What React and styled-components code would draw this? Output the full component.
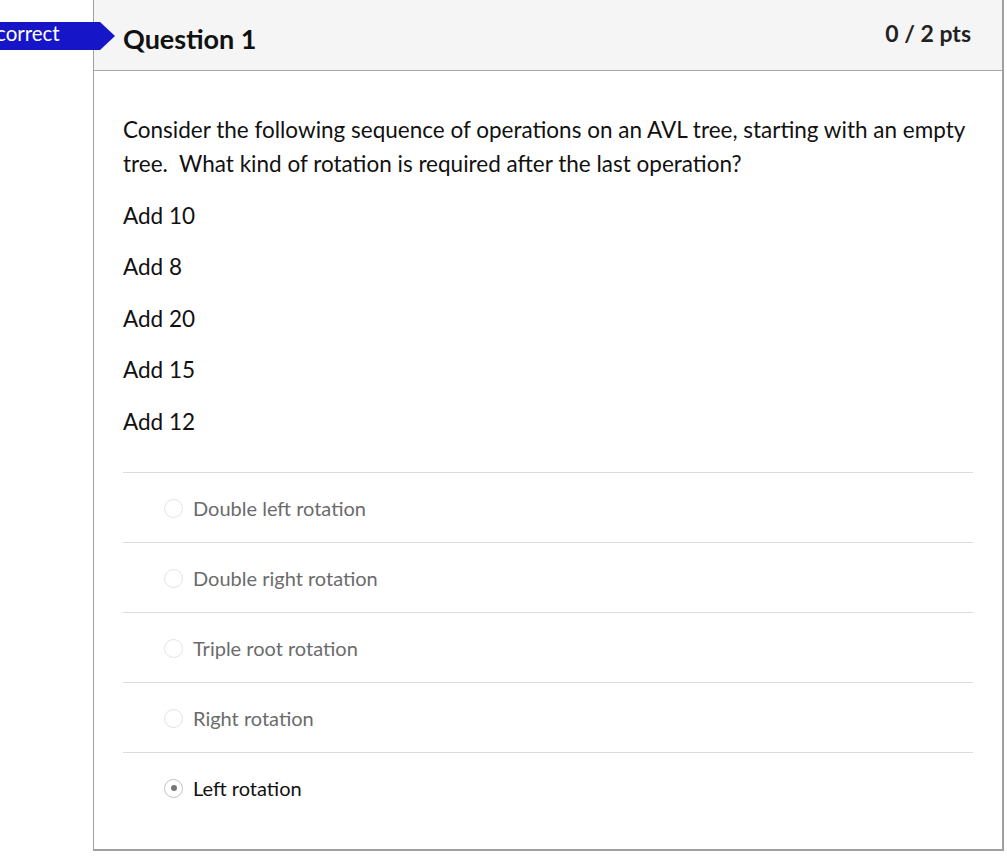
import React from "react";
import styled, { createGlobalStyle } from "styled-components";

const GlobalStyle = createGlobalStyle`
  body {
    margin: 0;
    background: #fff;
    font-family: Lato, "Open Sans", sans-serif;
    color: #2d3b45;
  }
`;

const answers = [
  { text: "Double left rotation" },
  { text: "Double right rotation" },
  { text: "Triple root rotation" },
  { text: "Right rotation" },
  { text: "Left rotation", selected: true },
];

const steps = ["Add 10", "Add 8", "Add 20", "Add 15", "Add 12"];

const App = () => {
  return (
    <Page>
      <GlobalStyle />
      <Banner>Incorrect</Banner>
      <Card>
        <Header>
          <Title>Question 1</Title>
          <Points>0 / 2 pts</Points>
        </Header>
        <Body>
          <Para>
            Consider the following sequence of operations on an AVL tree, starting with an empty
            tree.&nbsp; What kind of rotation is required after the last operation?
          </Para>
          {steps.map((s) => (
            <Para key={s}>{s}</Para>
          ))}
          <Answers>
            {answers.map((a) => (
              <Answer key={a.text}>
                <Radio $selected={a.selected} />
                <AnswerText $selected={a.selected}>{a.text}</AnswerText>
              </Answer>
            ))}
          </Answers>
        </Body>
      </Card>
    </Page>
  );
};

const Page = styled.div`
  position: relative;
  width: 1007px;
  height: 856px;
  overflow: hidden;
`;

const Banner = styled.div`
  position: absolute;
  left: -21px;
  top: 22px;
  height: 28px;
  width: 136px;
  box-sizing: border-box;
  background: #1616c8;
  color: #fff;
  font-size: 20.5px;
  line-height: 23px;
  clip-path: polygon(0 0, 89% 0, 100% 50%, 89% 100%, 0 100%);
  z-index: 2;
`;

const Card = styled.div`
  margin-left: 93px;
  margin-top: -1px;
  width: 911px;
  box-sizing: border-box;
  border: 1px solid #a0a0a0;
  border-right-width: 2px;
  border-bottom-width: 2px;
`;

const Header = styled.div`
  height: 71px;
  box-sizing: border-box;
  background: #f5f5f5;
  border-bottom: 1px solid #a8a8a8;
  display: flex;
  align-items: flex-start;
  justify-content: space-between;
  padding: 22px 31px 0 29px;
`;

const Title = styled.div`
  font-size: 27px;
  line-height: 34px;
  font-weight: 700;
  color: #111;
`;

const Points = styled.div`
  font-size: 23px;
  line-height: 24px;
  margin-top: -1px;
  font-weight: 700;
  color: #222;
`;

const Body = styled.div`
  padding: 42px 29px 27px 29px;
`;

const Para = styled.p`
  margin: 0 0 17.6px;
  font-size: 22.5px;
  line-height: 34px;
  color: #111;
`;

const Answers = styled.div`
  margin-top: 33px;
`;

const Answer = styled.div`
  height: 70px;
  border-top: 1px solid #dcdcdc;
  display: flex;
  align-items: center;
  padding-left: 41px;
  padding-top: 2px;
  box-sizing: border-box;
`;

const Radio = styled.span`
  width: 19px;
  height: 19px;
  border-radius: 50%;
  border: 1px solid ${(p) => (p.$selected ? "#c4c4c4" : "#e4e4e4")};
  box-sizing: border-box;
  margin-right: 10px;
  display: flex;
  align-items: center;
  justify-content: center;
  background: #fff;

  &::after {
    content: "";
    width: 6px;
    height: 6px;
    border-radius: 50%;
    background: ${(p) => (p.$selected ? "#777" : "transparent")};
  }
`;

const AnswerText = styled.span`
  font-size: 20px;
  color: ${(p) => (p.$selected ? "#111" : "#6b6b6b")};
`;

export default App;
